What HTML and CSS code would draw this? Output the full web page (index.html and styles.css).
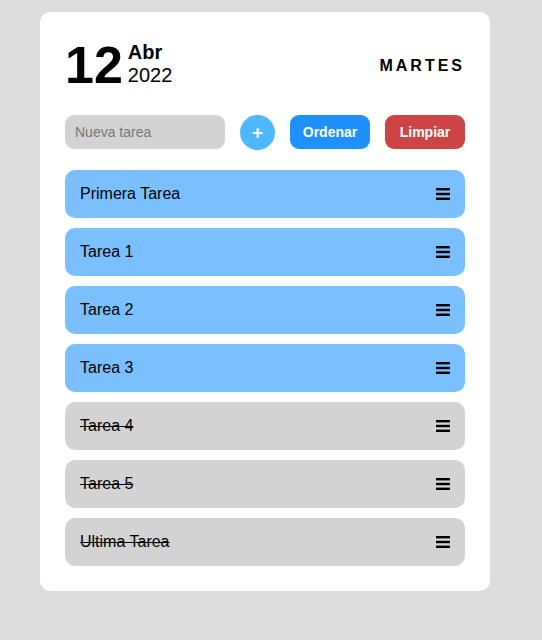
FILE: index.html
```html
<!DOCTYPE html>
<html lang="es">
<head>
<meta charset="utf-8">
<title>Tareas</title>
<link rel="stylesheet" href="styles.css">
</head>
<body>
<div class="card">
  <header class="header">
    <div class="date">
      <span class="day">12</span>
      <div class="month-year">
        <span class="month">Abr</span>
        <span class="year">2022</span>
      </div>
    </div>
    <div class="weekday">MARTES</div>
  </header>
  <div class="controls">
    <input class="new-task" type="text" placeholder="Nueva tarea">
    <button class="btn-add">+</button>
    <button class="btn btn-sort">Ordenar</button>
    <button class="btn btn-clear">Limpiar</button>
  </div>
  <ul class="tasks">
    <li class="task"><span>Primera Tarea</span><svg class="bars" viewBox="0 0 14 12"><rect y="0" width="14" height="2.4"/><rect y="4.8" width="14" height="2.4"/><rect y="9.6" width="14" height="2.4"/></svg></li>
    <li class="task"><span>Tarea 1</span><svg class="bars" viewBox="0 0 14 12"><rect y="0" width="14" height="2.4"/><rect y="4.8" width="14" height="2.4"/><rect y="9.6" width="14" height="2.4"/></svg></li>
    <li class="task"><span>Tarea 2</span><svg class="bars" viewBox="0 0 14 12"><rect y="0" width="14" height="2.4"/><rect y="4.8" width="14" height="2.4"/><rect y="9.6" width="14" height="2.4"/></svg></li>
    <li class="task"><span>Tarea 3</span><svg class="bars" viewBox="0 0 14 12"><rect y="0" width="14" height="2.4"/><rect y="4.8" width="14" height="2.4"/><rect y="9.6" width="14" height="2.4"/></svg></li>
    <li class="task done"><span>Tarea 4</span><svg class="bars" viewBox="0 0 14 12"><rect y="0" width="14" height="2.4"/><rect y="4.8" width="14" height="2.4"/><rect y="9.6" width="14" height="2.4"/></svg></li>
    <li class="task done"><span>Tarea 5</span><svg class="bars" viewBox="0 0 14 12"><rect y="0" width="14" height="2.4"/><rect y="4.8" width="14" height="2.4"/><rect y="9.6" width="14" height="2.4"/></svg></li>
    <li class="task done"><span>Ultima Tarea</span><svg class="bars" viewBox="0 0 14 12"><rect y="0" width="14" height="2.4"/><rect y="4.8" width="14" height="2.4"/><rect y="9.6" width="14" height="2.4"/></svg></li>
  </ul>
</div>
</body>
</html>
```
FILE: styles.css
```css
* { box-sizing: border-box; }
body {
  margin: 0;
  background: #dcdcdc;
  font-family: "Liberation Sans", Arial, sans-serif;
  color: #000;
}
.card {
  width: 450px;
  margin: 12px 0 0 40px;
  background: #fff;
  border-radius: 10px;
  padding: 25px;
}
.header {
  display: flex;
  justify-content: space-between;
  align-items: center;
  height: 56px;
}
.date {
  display: flex;
  align-items: flex-end;
}
.day {
  font-size: 52px;
  font-weight: bold;
  line-height: 1;
  margin-left: 0;
}
.month-year {
  display: flex;
  flex-direction: column;
  margin-left: 5px;
  margin-bottom: 4px;
  font-size: 20px;
  line-height: 23px;
}
.month { font-weight: bold; }
.weekday {
  font-size: 16px;
  font-weight: bold;
  letter-spacing: 3px;
  margin-top: 2px;
}
.controls {
  display: flex;
  gap: 15px;
  margin-top: 22px;
  height: 34px;
  align-items: center;
}
.new-task {
  width: 160px;
  height: 34px;
  border: none;
  background: #d3d3d3;
  border-radius: 9px;
  padding: 0 10px;
  font-family: inherit;
  font-size: 14px;
  outline: none;
}
.new-task::placeholder { color: #777; }
.btn-add {
  width: 35px;
  height: 35px;
  border-radius: 50%;
  border: none;
  background: #4db8ff;
  color: #fff;
  font-family: inherit;
  font-weight: bold;
  font-size: 19px;
  padding: 0;
  line-height: 1;
}
.btn {
  width: 80px;
  height: 34px;
  border: none;
  border-radius: 9px;
  color: #fff;
  font-family: inherit;
  font-weight: bold;
  font-size: 14px;
}
.btn-sort { background: #1e90ff; }
.btn-clear { background: #cc4444; }
.tasks {
  list-style: none;
  margin: 21px 0 0;
  padding: 0;
  display: flex;
  flex-direction: column;
  gap: 10px;
}
.task {
  height: 48px;
  border-radius: 10px;
  background: #7abfff;
  display: flex;
  align-items: center;
  justify-content: space-between;
  padding: 0 15px;
  font-size: 16px;
}
.task.done {
  background: #d3d3d3;
}
.task.done span { text-decoration: line-through; }
.bars {
  width: 14px;
  height: 12px;
  fill: #000;
}
```
